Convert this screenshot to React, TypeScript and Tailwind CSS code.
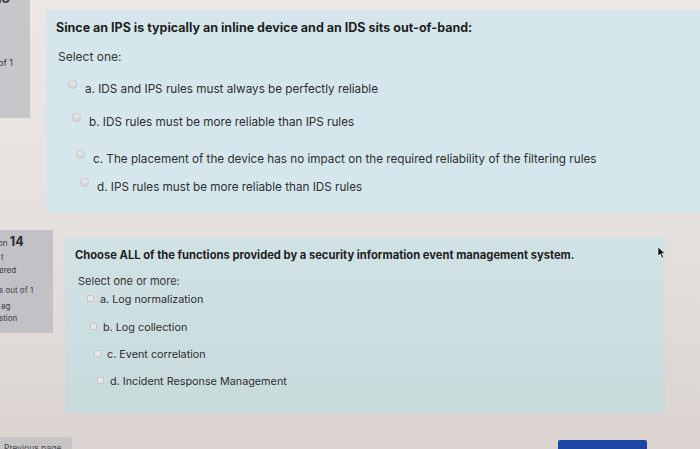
import React from "react"

const radioOptions = [
  { label: "a. IDS and IPS rules must always be perfectly reliable", indent: "pl-[12px]", gap: "mt-[17px]" },
  { label: "b. IDS rules must be more reliable than IPS rules", indent: "pl-[16px]", gap: "mt-[18px]" },
  { label: "c. The placement of the device has no impact on the required reliability of the filtering rules", indent: "pl-[20px]", gap: "mt-[22px]" },
  { label: "d. IPS rules must be more reliable than IDS rules", indent: "pl-[24px]", gap: "mt-[13px]" },
]

const checkOptions = [
  { label: "a. Log normalization", indent: "pl-[12px]", gap: "mt-[5px]" },
  { label: "b. Log collection", indent: "pl-[15px]", gap: "mt-[14px]" },
  { label: "c. Event correlation", indent: "pl-[19px]", gap: "mt-[13px]" },
  { label: "d. Incident Response Management", indent: "pl-[22px]", gap: "mt-[13px]" },
]

function Radio() {
  return (
    <span className="inline-block h-[9px] w-[9px] shrink-0 -translate-y-[5px] rounded-full border border-[#c4c4c6] bg-gradient-to-b from-[#efefef] to-[#d2d2d3]" />
  )
}

function Checkbox() {
  return (
    <span className="inline-block h-[7px] w-[7px] shrink-0 -translate-y-[2px] rounded-[1px] border border-[#c4c4c6] bg-[#e8e8e9]" />
  )
}

export default function App() {
  return (
    <div className="relative flex h-[449px] w-[700px] flex-col overflow-hidden bg-gradient-to-b from-[#ebe7e5] via-[#e5e1df] to-[#dad3d0] font-['Inter',sans-serif] text-[#2b2b2d]">
      {/* question 13 */}
      <div className="flex items-start">
        <div className="h-[118px] w-[30px] shrink-0 overflow-hidden bg-[#c7c6ca] text-[9px] text-[#3b3b3e]">
          <div className="-mt-[9px] -ml-[4px] text-[13px] font-bold leading-[15px]">13</div>
          <div className="mt-[50px] -ml-[2px] whitespace-nowrap">of 1</div>
        </div>
        <div className="ml-[16px] mt-[10px] h-[202px] flex-1 bg-[#d5e7ec] pl-[10px] pt-[9px]">
          <div className="whitespace-nowrap text-[12.5px] font-bold leading-[18px] text-[#1f1f22]">
            Since an IPS is typically an inline device and an IDS sits out-of-band:
          </div>
          <div className="mt-[11px] pl-[2px] text-[12px] leading-[17px] text-[#333336]">Select one:</div>
          {radioOptions.map((o) => (
            <div key={o.label} className={`flex items-center gap-[8px] ${o.indent} ${o.gap}`}>
              <Radio />
              <span className="whitespace-nowrap text-[11.7px] leading-[15px] text-[#2e2e31]">{o.label}</span>
            </div>
          ))}
        </div>
      </div>

      {/* question 14 */}
      <div className="mt-[18px] flex items-start">
        <div className="h-[103px] w-[53px] shrink-0 overflow-hidden bg-[#c2c1c5] pt-[5px] text-[8px] leading-[13px] text-[#3d3d40]">
          <div className="-ml-[2px] whitespace-nowrap">
            on <span className="text-[12.5px] font-bold text-[#2a2a2d]">14</span>
          </div>
          <div className="ml-[1px] mt-[1px]">t</div>
          <div className="-ml-[1px]">ered</div>
          <div className="-ml-[1px] mt-[7px] whitespace-nowrap">s out of 1</div>
          <div className="ml-[1px] mt-[3px]">ag</div>
          <div className="-ml-[1px] -mt-[1px]">stion</div>
        </div>
        <div className="ml-[12px] mt-[8px] h-[175px] w-[600px] bg-gradient-to-b from-[#d0e2e4] to-[#c9dadb] pl-[10px] pt-[10px]">
          <div className="whitespace-nowrap text-[11.2px] font-bold leading-[14px] text-[#1f1f22]">
            Choose ALL of the functions provided by a security information event management system.
          </div>
          <div className="mt-[12px] pl-[3px] text-[11px] leading-[14px] text-[#333336]">Select one or more:</div>
          {checkOptions.map((o) => (
            <div key={o.label} className={`flex items-center gap-[6px] ${o.indent} ${o.gap}`}>
              <Checkbox />
              <span className="whitespace-nowrap text-[10.8px] leading-[14px] text-[#2e2e31]">{o.label}</span>
            </div>
          ))}
        </div>
      </div>

      {/* navigation */}
      <div className="-mb-[10px] mt-auto flex items-end">
        <button className="h-[22px] w-[72px] rounded-tr-[2px] bg-[#c8c3c5] pl-[4px] text-left text-[8.5px] leading-[20px] text-[#4a4a4e]">
          Previous page
        </button>
        <button className="ml-[486px] h-[19px] w-[89px] rounded-[2px] bg-[#1b46a3]" aria-label="Next page" />
      </div>

      {/* mouse pointer */}
      <svg className="absolute left-[657px] top-[246px]" width="9" height="13" viewBox="0 0 9 13">
        <path d="M1 1 L1 10 L3.3 8 L5 12 L6.5 11.3 L4.9 7.5 L8 7.5 Z" fill="#111" stroke="#fff" strokeWidth="0.6" />
      </svg>
    </div>
  )
}
